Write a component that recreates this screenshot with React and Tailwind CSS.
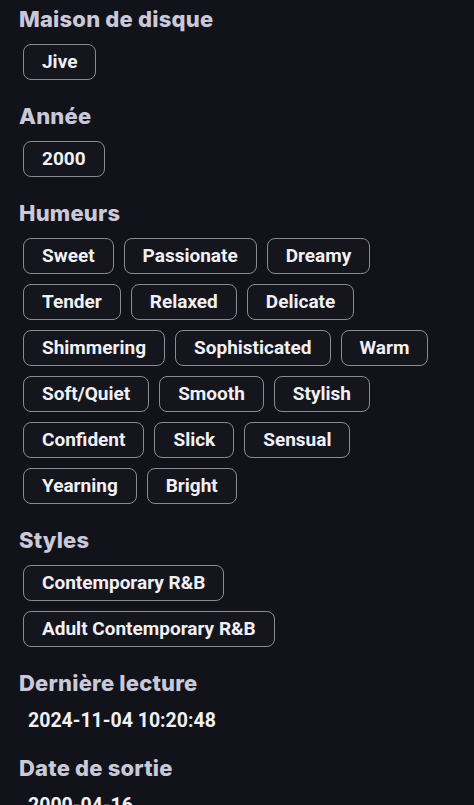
const SECTIONS = [
  { title: 'Maison de disque', chips: ['Jive'] },
  { title: 'Année', chips: ['2000'] },
  {
    title: 'Humeurs',
    chips: [
      'Sweet', 'Passionate', 'Dreamy',
      'Tender', 'Relaxed', 'Delicate',
      'Shimmering', 'Sophisticated', 'Warm',
      'Soft/Quiet', 'Smooth', 'Stylish',
      'Confident', 'Slick', 'Sensual',
      'Yearning', 'Bright',
    ],
  },
  { title: 'Styles', chips: ['Contemporary R&B', 'Adult Contemporary R&B'] },
];

const TEXT_ROWS = [
  { title: 'Dernière lecture', value: '2024-11-04 10:20:48' },
  { title: 'Date de sortie', value: '2000-04-16' },
];

function Heading({ children }) {
  return (
    <h3 className="font-['Inter',sans-serif] font-extrabold text-[22px] leading-7 text-[#c9c9d9] tracking-[0.2px]">
      {children}
    </h3>
  );
}

function Chip({ label }) {
  return (
    <span className="inline-flex items-center h-9 px-[18px] rounded-lg border border-[#8b8b93] bg-[#15151d] text-[19px] font-bold text-[#f0f0f5] font-['Roboto',sans-serif]">
      {label}
    </span>
  );
}

export default function App() {
  return (
    <div className="w-full bg-[#12121a] px-[19px] pt-[5px] overflow-hidden h-[805px]">
      {SECTIONS.map(({ title, chips }) => (
        <section key={title} className="mb-[22px]">
          <Heading>{title}</Heading>
          <div className="mt-[11px] ml-1 flex flex-wrap gap-[10px] pr-4">
            {chips.map((c) => (
              <Chip key={c} label={c} />
            ))}
          </div>
        </section>
      ))}
      {TEXT_ROWS.map(({ title, value }) => (
        <section key={title} className="mb-[15px]">
          <Heading>{title}</Heading>
          <div className="mt-[6px] pl-[9px] h-9 flex items-center text-[19.5px] font-bold text-[#f0f0f5] font-['Roboto',sans-serif]">
            {value}
          </div>
        </section>
      ))}
    </div>
  );
}
